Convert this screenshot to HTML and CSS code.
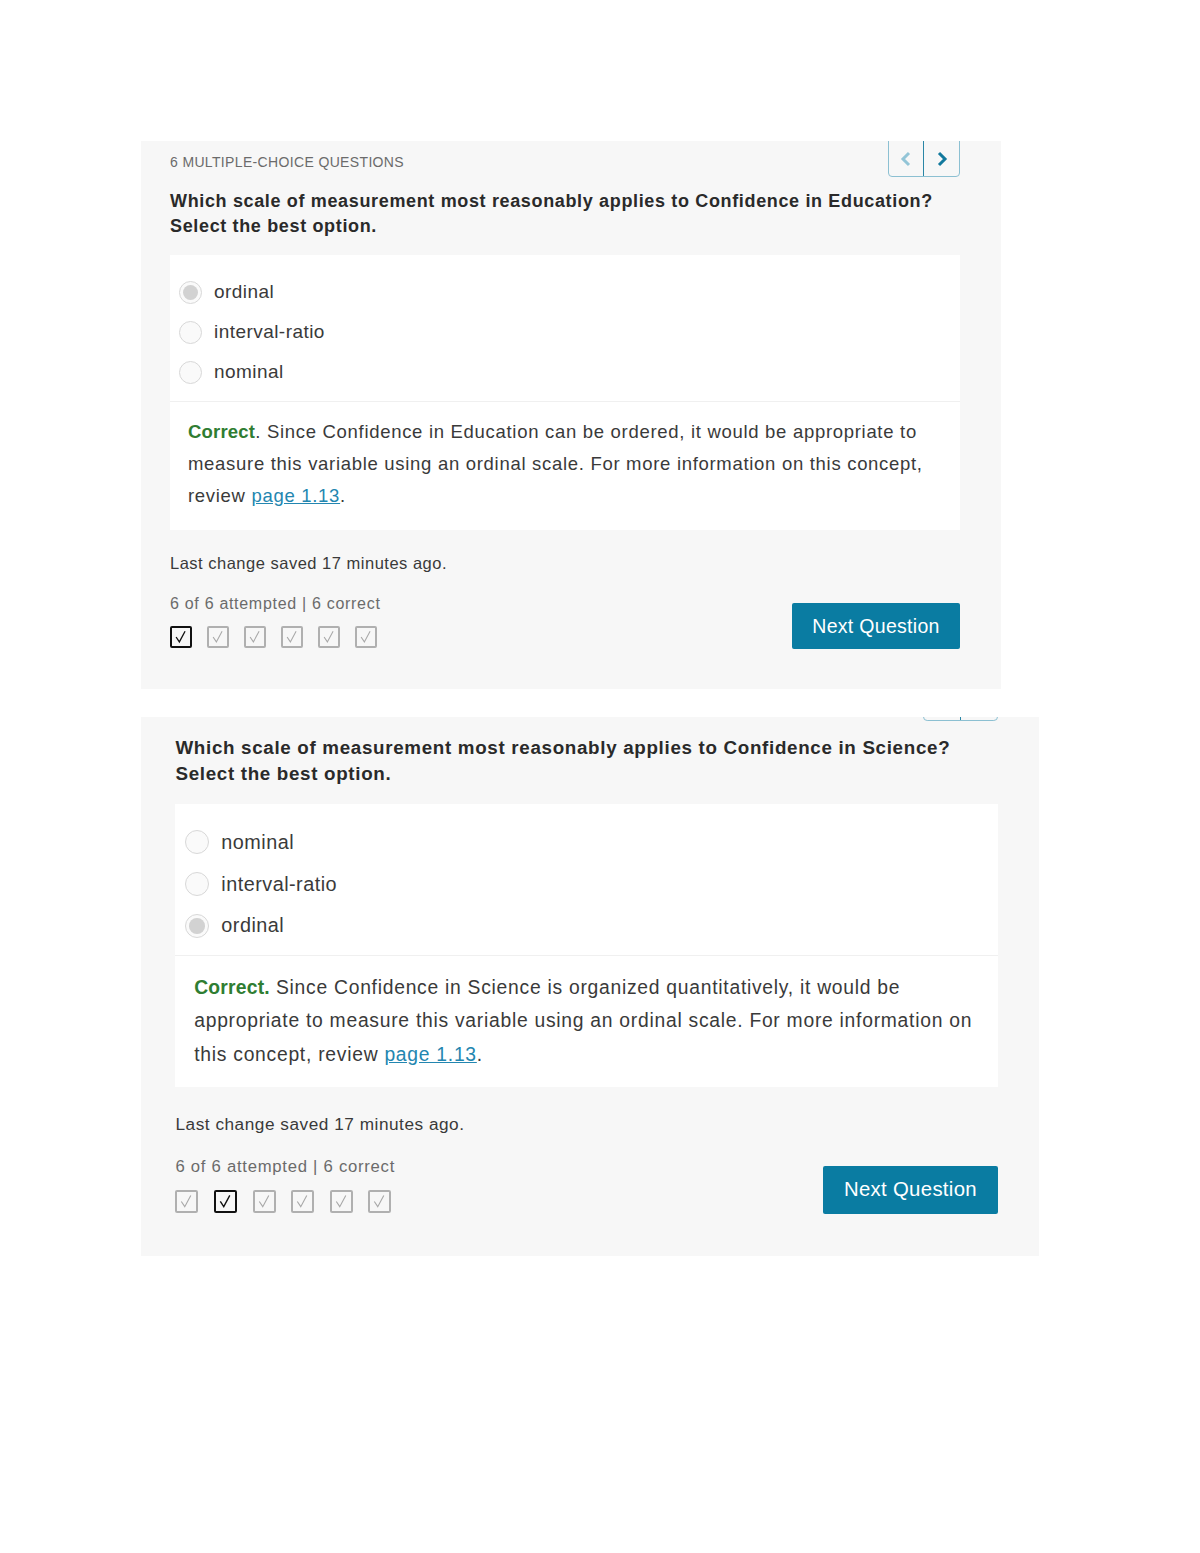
FILE: index.html
```html
<!DOCTYPE html>
<html lang="en">
<head>
  <meta charset="UTF-8" />
  <meta name="viewport" content="width=device-width, initial-scale=1.0"/>
  <title>Multiple-Choice Questions</title>
  <link rel="stylesheet" href="styles.css">
</head>
<body>
  <div class="page">

    <!-- Question 1 -->
    <section class="question-card">
      <div class="question-nav">
        <button class="nav-btn nav-prev" aria-label="Previous">
          <svg width="12" height="16" viewBox="0 0 12 16"><polyline points="9,2 3,8 9,14" fill="none" stroke="currentColor" stroke-width="3"/></svg>
        </button>
        <button class="nav-btn nav-next" aria-label="Next">
          <svg width="12" height="16" viewBox="0 0 12 16"><polyline points="3,2 9,8 3,14" fill="none" stroke="currentColor" stroke-width="3"/></svg>
        </button>
      </div>
      <div class="question-count">6 MULTIPLE-CHOICE QUESTIONS</div>
      <p class="question-text">Which scale of measurement most reasonably applies to Confidence in Education? Select the best option.</p>

      <div class="answer-box">
        <div class="options">
          <label class="option"><span class="radio selected"></span>ordinal</label>
          <label class="option"><span class="radio"></span>interval-ratio</label>
          <label class="option"><span class="radio"></span>nominal</label>
        </div>
        <div class="feedback">
          <span class="correct">Correct</span>. Since Confidence in Education can be ordered, it would be appropriate to measure this variable using an ordinal scale. For more information on this concept, review <a href="#">page 1.13</a>.
        </div>
      </div>

      <div class="saved">Last change saved 17 minutes ago.</div>
      <div class="progress-row">
        <div class="progress">
          <div class="progress-label">6 of 6 attempted | 6 correct</div>
          <div class="progress-boxes">
            <span class="box current"><svg viewBox="0 0 22 22"><polyline points="5,11 9,17 16,4" /></svg></span>
            <span class="box"><svg viewBox="0 0 22 22"><polyline points="5,11 9,17 16,4" /></svg></span>
            <span class="box"><svg viewBox="0 0 22 22"><polyline points="5,11 9,17 16,4" /></svg></span>
            <span class="box"><svg viewBox="0 0 22 22"><polyline points="5,11 9,17 16,4" /></svg></span>
            <span class="box"><svg viewBox="0 0 22 22"><polyline points="5,11 9,17 16,4" /></svg></span>
            <span class="box"><svg viewBox="0 0 22 22"><polyline points="5,11 9,17 16,4" /></svg></span>
          </div>
        </div>
        <button class="next-btn">Next Question</button>
      </div>
    </section>

    <!-- Question 2 -->
    <section class="question-card second">
      <div class="question-nav">
        <button class="nav-btn nav-prev" aria-label="Previous">
          <svg width="12" height="16" viewBox="0 0 12 16"><polyline points="9,2 3,8 9,14" fill="none" stroke="currentColor" stroke-width="3"/></svg>
        </button>
        <button class="nav-btn nav-next" aria-label="Next">
          <svg width="12" height="16" viewBox="0 0 12 16"><polyline points="3,2 9,8 3,14" fill="none" stroke="currentColor" stroke-width="3"/></svg>
        </button>
      </div>
      <p class="question-text">Which scale of measurement most reasonably applies to Confidence in Science? Select the best option.</p>

      <div class="answer-box">
        <div class="options">
          <label class="option"><span class="radio"></span>nominal</label>
          <label class="option"><span class="radio"></span>interval-ratio</label>
          <label class="option"><span class="radio selected"></span>ordinal</label>
        </div>
        <div class="feedback">
          <span class="correct">Correct.</span> Since Confidence in Science is organized quantitatively, it would be appropriate to measure this variable using an ordinal scale. For more information on this concept, review <a href="#">page 1.13</a>.
        </div>
      </div>

      <div class="saved">Last change saved 17 minutes ago.</div>
      <div class="progress-row">
        <div class="progress">
          <div class="progress-label">6 of 6 attempted | 6 correct</div>
          <div class="progress-boxes">
            <span class="box"><svg viewBox="0 0 22 22"><polyline points="5,11 9,17 16,4" /></svg></span>
            <span class="box current"><svg viewBox="0 0 22 22"><polyline points="5,11 9,17 16,4" /></svg></span>
            <span class="box"><svg viewBox="0 0 22 22"><polyline points="5,11 9,17 16,4" /></svg></span>
            <span class="box"><svg viewBox="0 0 22 22"><polyline points="5,11 9,17 16,4" /></svg></span>
            <span class="box"><svg viewBox="0 0 22 22"><polyline points="5,11 9,17 16,4" /></svg></span>
            <span class="box"><svg viewBox="0 0 22 22"><polyline points="5,11 9,17 16,4" /></svg></span>
          </div>
        </div>
        <button class="next-btn">Next Question</button>
      </div>
    </section>

  </div>
</body>
</html>
```

FILE: styles.css
```css
:root {
  --card-bg: #f7f7f7;
  --text: #333333;
  --muted: #6b6b6b;
  --blue: #0a7ca2;
  --green: #2f7d32;
}

body {
  margin: 0;
  background: #ffffff;
  font-family: 'Liberation Sans', Arial, sans-serif;
  color: var(--text);
}

.page {
  padding: 141px 0 60px 141px;
}

.question-card {
  position: relative;
  overflow: hidden;
  width: 860px;
  box-sizing: border-box;
  background: var(--card-bg);
  padding: 12px 41px 41px 29px;
}

.question-card.second {
  zoom: 1.044;
  margin-top: 27px;
  padding: 17px 39px 41px 33px;
}

/* prev / next arrows, cut off at the top of the card */
.question-nav {
  position: absolute;
  top: -8px;
  right: 41px;
  display: flex;
  border: 1px solid #8cc0d2;
  border-radius: 0 0 4px 4px;
  background: var(--card-bg);
}

.question-card.second .question-nav {
  top: -40px;
  right: 39px;
}

.nav-btn {
  width: 35px;
  height: 42px;
  padding: 8px 0 0;
  border: none;
  background: transparent;
  display: flex;
  align-items: center;
  justify-content: center;
}

.nav-prev {
  color: #93c5d7;
  border-right: 1px solid #2a86a6;
}

.nav-next {
  color: #12799d;
}

.question-count {
  font-size: 14px;
  line-height: 18px;
  color: var(--muted);
  letter-spacing: 0.35px;
}

.question-text {
  margin: 18px 0 16px;
  font-size: 18px;
  line-height: 25px;
  font-weight: bold;
  letter-spacing: 0.65px;
  color: #2a2a2a;
}

.question-card.second .question-text {
  margin: 0 0 16px;
}

.answer-box {
  background: #ffffff;
}

.options {
  display: flex;
  flex-direction: column;
  padding: 17px 9px 9px;
  border-bottom: 1px solid #f0f0f0;
}

.question-card.second .options {
  padding-bottom: 8px;
}

.option {
  display: flex;
  align-items: center;
  gap: 12px;
  height: 40px;
  font-size: 19px;
  letter-spacing: 0.45px;
  color: #3a3a3a;
}

.radio {
  width: 23px;
  height: 23px;
  border: 1px solid #d8d8d8;
  border-radius: 50%;
  background: #fafafa;
  box-sizing: border-box;
  display: flex;
  align-items: center;
  justify-content: center;
}

.radio.selected::after {
  content: "";
  width: 15px;
  height: 15px;
  border-radius: 50%;
  background: #d2d2d2;
}

.feedback {
  padding: 14px 22px 18px 18px;
  font-size: 18.5px;
  line-height: 32px;
  letter-spacing: 0.7px;
  color: #3a3a3a;
}

.question-card.second .feedback {
  padding-bottom: 15px;
}

.correct {
  color: var(--green);
  font-weight: bold;
  letter-spacing: 0.2px;
}

.feedback a {
  color: #2386b0;
}

.saved {
  margin-top: 23px;
  font-size: 16.5px;
  line-height: 20px;
  letter-spacing: 0.5px;
  color: #3a3a3a;
}

.question-card.second .saved {
  margin-top: 26px;
}

.progress-row {
  display: flex;
  justify-content: space-between;
  align-items: flex-end;
  margin-top: 21px;
}

.progress-label {
  font-size: 16px;
  line-height: 20px;
  letter-spacing: 0.7px;
  color: var(--muted);
}

.progress-boxes {
  display: flex;
  gap: 15px;
  margin-top: 12px;
}

.box {
  width: 22px;
  height: 22px;
  box-sizing: border-box;
  border: 2px solid #b0b0b0;
  border-radius: 2px;
  display: flex;
}

.box svg {
  width: 100%;
  height: 100%;
}

.box polyline {
  fill: none;
  stroke: #a8a8a8;
  stroke-width: 1.3;
}

.box.current {
  border-color: #111111;
}

.box.current polyline {
  stroke: #111111;
  stroke-width: 1.6;
}

.next-btn {
  width: 168px;
  height: 46px;
  margin-bottom: -1px;
  border: none;
  border-radius: 2px;
  background: var(--blue);
  color: #ffffff;
  font-family: inherit;
  font-size: 19.5px;
  letter-spacing: 0.3px;
}
```
